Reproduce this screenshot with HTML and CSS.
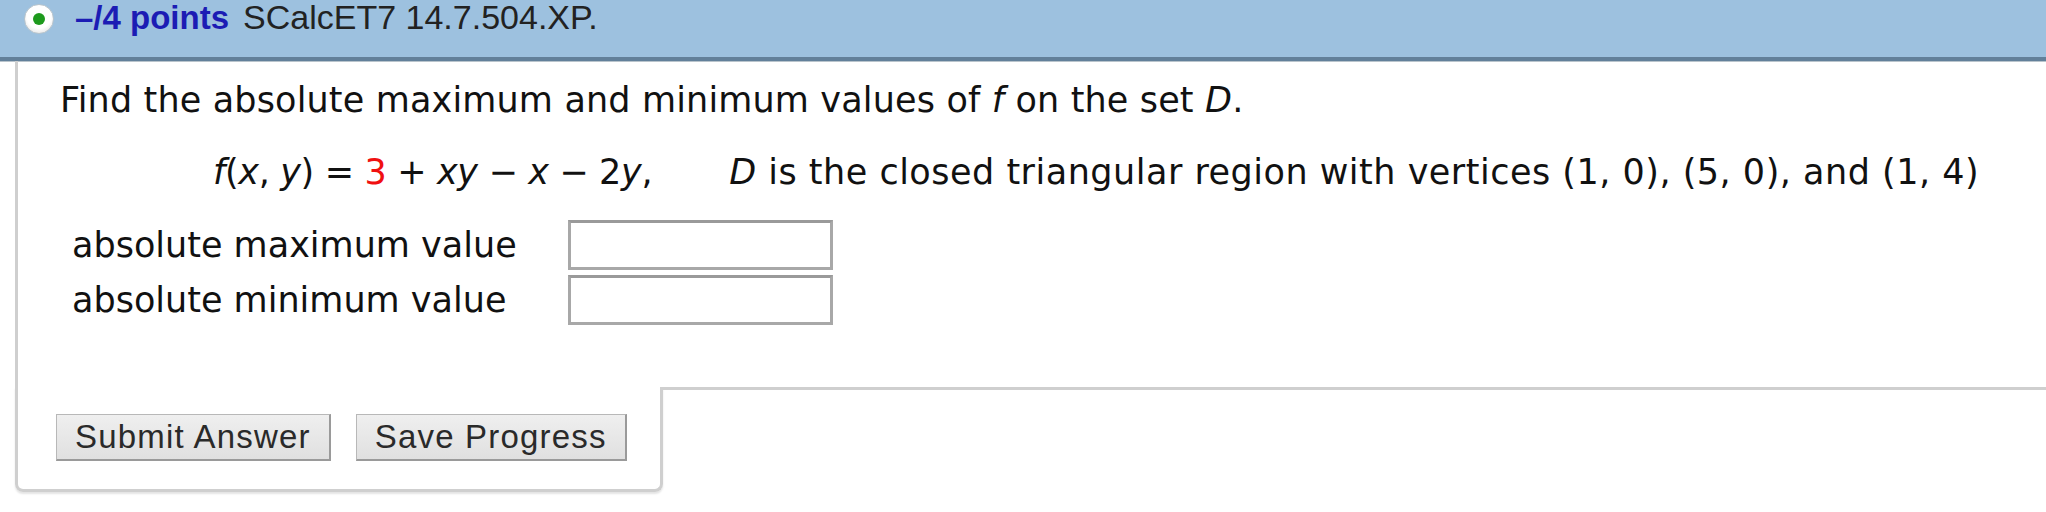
FILE: index.html
```html
<!DOCTYPE html>
<html>
<head>
<meta charset="utf-8">
<link rel="stylesheet" href="styles.css">
</head>
<body>
<div class="header">
  <span class="radio"><span class="dot"></span></span>
  <span class="points">–/4 points</span>
  <span class="code">SCalcET7 14.7.504.XP.</span>
</div>
<div class="panel">
  <div class="content">
    <p class="prompt">Find the absolute maximum and minimum values of <i>f</i> on the set <i>D</i>.</p>
    <p class="formula"><span class="expr"><i>f</i>(<i>x</i>, <i>y</i>) = <span class="red">3</span> + <i>xy</i> − <i>x</i> − 2<i>y</i>,</span><span class="domain"><i>D</i> is the closed triangular region with vertices (1, 0), (5, 0), and (1, 4)</span></p>
    <div class="answers">
      <label class="lbl">absolute maximum value</label><input class="box" type="text">
      <label class="lbl">absolute minimum value</label><input class="box" type="text">
    </div>
  </div>
  <div class="footer">
    <div class="btns">
      <button class="btn">Submit Answer</button>
      <button class="btn">Save Progress</button>
    </div>
    <div class="filler"></div>
  </div>
</div>
</body>
</html>
```
FILE: styles.css
```css
html, body { margin: 0; padding: 0; background: #fff; }
body { width: 2046px; height: 512px; overflow: hidden; font-family: "DejaVu Sans", Verdana, sans-serif; color: #111; }

.header {
  height: 57px;
  background: #9dc1df;
  border-bottom: 4px solid #62809a;
  box-shadow: 0 1px 0 #b9c4cc;
  display: flex;
  align-items: center;
  font-family: "Liberation Sans", Arial, sans-serif;
  font-size: 33px;
}
.radio {
  width: 28px; height: 28px;
  margin-left: 24px;
  margin-right: 21px;
  margin-top: -20px;
  border-radius: 50%;
  background: radial-gradient(circle at 50% 40%, #ffffff 55%, #d6d6d6 100%);
  border: 1px solid #b8c4cc;
  display: flex; align-items: center; justify-content: center;
}
.dot { width: 12px; height: 12px; border-radius: 50%; background: #1d9a1d; }
.points { color: #1c1cb4; font-weight: bold; margin-right: 14px; margin-top: -22px; }
.code { color: #222; margin-top: -22px; font-size: 34px; }

.panel { margin-left: 15px; }
.content {
  border-left: 3px solid #cfcfcf;
  height: 326px;
  padding-left: 42px;
  padding-top: 17px;
  box-sizing: border-box;
}
.prompt { margin: 0; font-size: 35px; line-height: 44px; letter-spacing: 0.15px; }
.formula { margin: 28px 0 0 153px; font-size: 35px; line-height: 44px; white-space: nowrap; }
.expr { letter-spacing: -0.35px; }
.domain { margin-left: 77px; letter-spacing: 0.5px; }
.red { color: #f01010; }
.answers {
  display: grid;
  grid-template-columns: 496px 265px;
  grid-auto-rows: 55px;
  margin: 23px 0 0 12px;
  align-items: center;
}
.lbl { font-size: 35px; line-height: 40px; }
.box {
  width: 265px; height: 50px;
  box-sizing: border-box;
  border: 3px solid #a8a8a8;
  border-top-color: #9a9a9a;
  background: #fff;
  margin: 0; padding: 0;
}

.footer { display: flex; height: 105px; }
.btns {
  width: 648px;
  box-sizing: border-box;
  border: 3px solid #cfcfcf;
  border-top: none;
  border-bottom-left-radius: 8px;
  border-bottom-right-radius: 8px;
  display: flex;
  gap: 25px;
  padding: 27px 0 0 38px;
  align-items: flex-start;
  box-shadow: 0 2px 2px #e4e4e4;
}
.btn {
  font-family: "Liberation Sans", Arial, sans-serif;
  font-size: 33px;
  letter-spacing: 1.2px;
  color: #2a2a2a;
  height: 47px;
  padding: 0 18px;
  background: linear-gradient(#efefef, #e0e0e0);
  border: 1px solid #b8b8b8;
  border-right: 2px solid #9a9a9a;
  border-bottom: 2px solid #9a9a9a;
  margin: 0;
}
.filler { flex: 1; border-top: 3px solid #cfcfcf; height: 0; }
```
